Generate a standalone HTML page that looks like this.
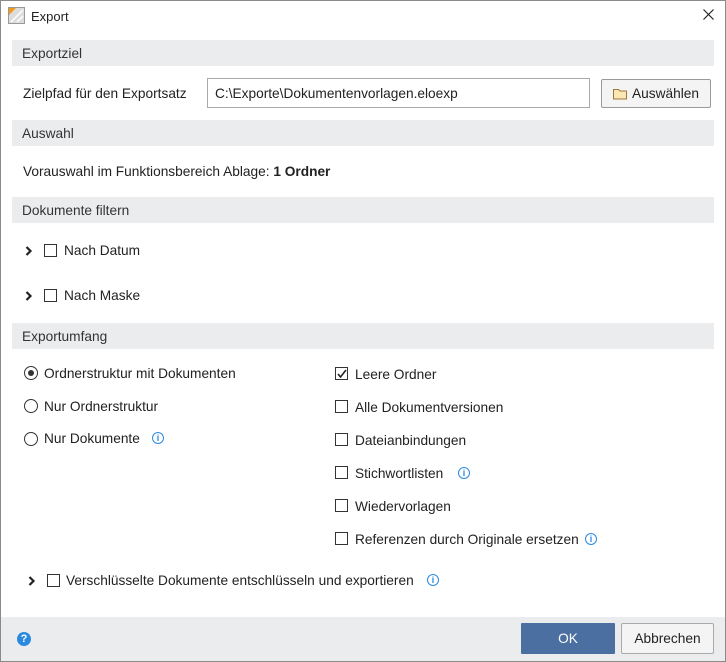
<!DOCTYPE html>
<html><head><style>
*{box-sizing:border-box;margin:0;padding:0}
body{width:726px;height:662px;background:#fff;font-family:"Liberation Sans",sans-serif;font-size:13.7px;color:#222;position:relative;overflow:hidden}
.win{position:absolute;left:0;top:0;width:726px;height:662px;border:1px solid #8a8a8a}
.a{position:absolute;white-space:nowrap}
.hdr{position:absolute;left:12px;width:702px;height:26px;background:#ebecee;padding:6px 0 0 10px;color:#333}
.cb{position:absolute;width:13px;height:13px;border:1px solid #333;background:#fff}
.rb{position:absolute;width:14px;height:14px;border:1px solid #333;border-radius:50%;background:#fff}
.chev{position:absolute;width:8px;height:10px}
.info{position:absolute;width:12px;height:12px;border:1.3px solid #2b8ae0;border-radius:50%;color:#2b8ae0;font-size:9px;font-weight:bold;text-align:center;line-height:10px}
</style></head><body>
<div class="win"></div>
<svg class="a" style="left:8px;top:7px" width="17" height="17"><rect x="0.5" y="0.5" width="16" height="16" fill="#ddd" stroke="#999"/><polygon points="1,1 8,1 1,8" fill="#f29a1d"/><path d="M3 15 L15 3 M9 15 L15 9" stroke="#fff" stroke-width="1.5"/></svg>
<div class="a" style="left:31px;top:9px;font-size:13px">Export</div>
<svg class="a" style="left:703px;top:9px" width="11" height="11"><path d="M0.5 0.5L10.5 10.5M10.5 0.5L0.5 10.5" stroke="#222" stroke-width="1.2"/></svg>

<div class="hdr" style="top:40px">Exportziel</div>
<div class="a" style="left:23px;top:86px">Zielpfad für den Exportsatz</div>
<div class="a" style="left:207px;top:78px;width:383px;height:30px;border:1px solid #aaa;padding:7px 0 0 7px">C:\Exporte\Dokumentenvorlagen.eloexp</div>
<div class="a" style="left:601px;top:79px;width:110px;height:29px;border:1px solid #999;border-radius:2px;background:#f4f4f4;padding:6px 0 0 30px">Auswählen</div>
<svg class="a" style="left:613px;top:88px" width="14" height="12"><path d="M0.5 1.5h5l1.5 1.5h6.5v8h-13z" fill="#fbe7b4" stroke="#9a7a3a"/></svg>

<div class="hdr" style="top:120px">Auswahl</div>
<div class="a" style="left:23px;top:164px">Vorauswahl im Funktionsbereich Ablage: <b>1 Ordner</b></div>

<div class="hdr" style="top:197px">Dokumente filtern</div>
<svg class="chev" style="left:25px;top:246px"><path d="M1.5 1l4 4-4 4" stroke="#222" stroke-width="2.2" fill="none"/></svg>
<div class="cb" style="left:44px;top:244px"></div>
<div class="a" style="left:64px;top:243px">Nach Datum</div>
<svg class="chev" style="left:25px;top:291px"><path d="M1.5 1l4 4-4 4" stroke="#222" stroke-width="2.2" fill="none"/></svg>
<div class="cb" style="left:44px;top:289px"></div>
<div class="a" style="left:64px;top:288px">Nach Maske</div>

<div class="hdr" style="top:323px">Exportumfang</div>
<div class="rb" style="left:24px;top:366px"><div style="position:absolute;left:3px;top:3px;width:6px;height:6px;border-radius:50%;background:#333"></div></div>
<div class="a" style="left:44px;top:366px">Ordnerstruktur mit Dokumenten</div>
<div class="rb" style="left:24px;top:399px"></div>
<div class="a" style="left:44px;top:399px">Nur Ordnerstruktur</div>
<div class="rb" style="left:24px;top:432px"></div>
<div class="a" style="left:44px;top:431px">Nur Dokumente</div>
<div class="info" style="left:152px;top:432px">i</div>

<div class="cb" style="left:335px;top:367px"><svg width="11" height="11" style="position:absolute;left:0;top:0"><path d="M2 6l2.5 3L10 2" stroke="#222" stroke-width="1.6" fill="none"/></svg></div>
<div class="a" style="left:355px;top:367px">Leere Ordner</div>
<div class="cb" style="left:335px;top:400px"></div>
<div class="a" style="left:355px;top:400px">Alle Dokumentversionen</div>
<div class="cb" style="left:335px;top:433px"></div>
<div class="a" style="left:355px;top:433px">Dateianbindungen</div>
<div class="cb" style="left:335px;top:466px"></div>
<div class="a" style="left:355px;top:466px">Stichwortlisten</div>
<div class="info" style="left:458px;top:467px">i</div>
<div class="cb" style="left:335px;top:499px"></div>
<div class="a" style="left:355px;top:499px">Wiedervorlagen</div>
<div class="cb" style="left:335px;top:532px"></div>
<div class="a" style="left:355px;top:532px">Referenzen durch Originale ersetzen</div>
<div class="info" style="left:585px;top:533px">i</div>

<svg class="chev" style="left:28px;top:576px"><path d="M1.5 1l4 4-4 4" stroke="#222" stroke-width="2.2" fill="none"/></svg>
<div class="cb" style="left:47px;top:574px"></div>
<div class="a" style="left:66px;top:573px">Verschlüsselte Dokumente entschlüsseln und exportieren</div>
<div class="info" style="left:427px;top:574px">i</div>

<div class="a" style="left:1px;top:617px;width:724px;height:44px;background:#ebecee"></div>
<div class="a" style="left:17px;top:632px;width:14px;height:14px;border-radius:50%;background:#2b8ae0;color:#fff;font-size:11px;font-weight:bold;text-align:center;line-height:14px">?</div>
<div class="a" style="left:521px;top:623px;width:94px;height:31px;background:#4a6fa0;color:#fff;text-align:center;line-height:31px;border-radius:1px">OK</div>
<div class="a" style="left:621px;top:623px;width:93px;height:31px;background:#f4f4f4;border:1px solid #aaa;border-radius:2px;text-align:center;line-height:29px">Abbrechen</div>
</body></html>
